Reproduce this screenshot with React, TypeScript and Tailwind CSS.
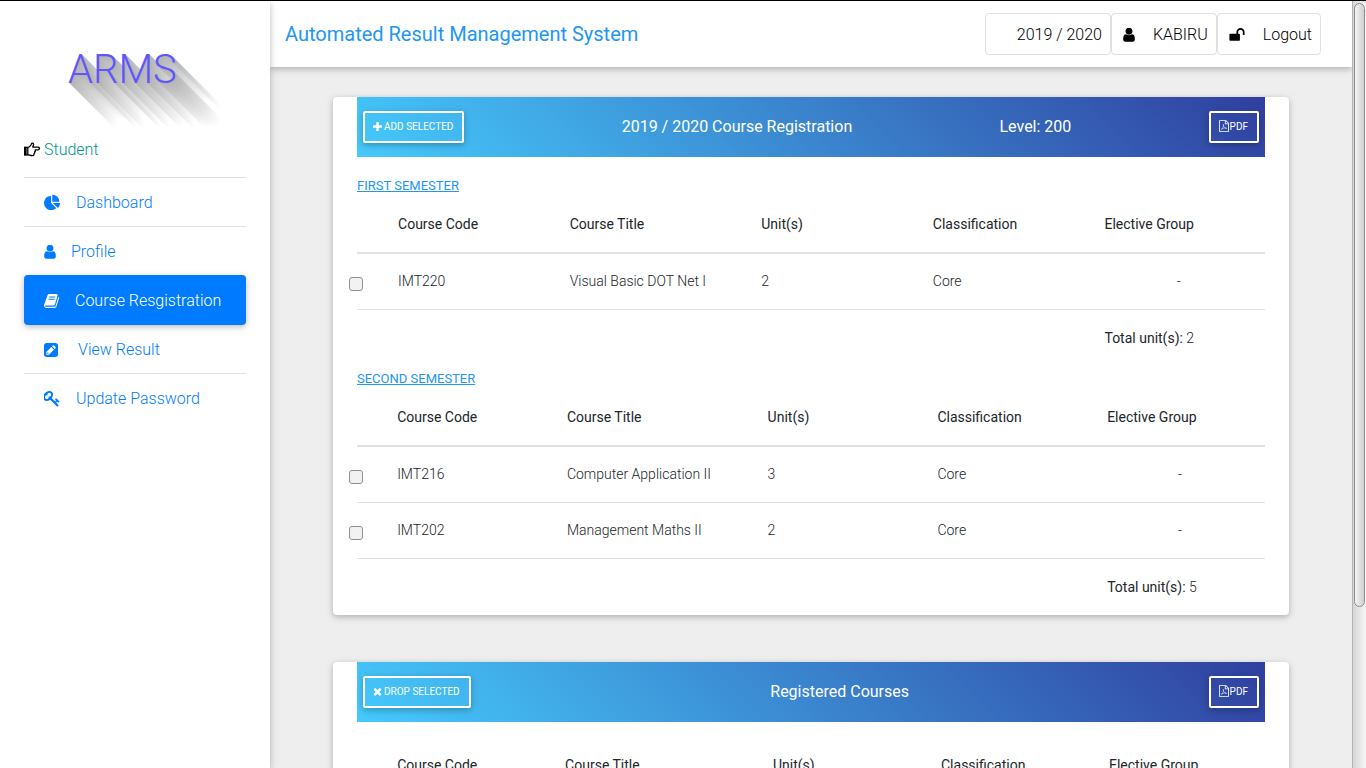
import type { CSSProperties, ReactNode } from 'react';

type IconProps = {
  className?: string;
};

type Course = {
  code: string;
  title: string;
  units: number;
  classification: string;
  group: string;
};

type CourseTableProps = {
  label: string;
  columns: string[];
  courses: Course[];
  showTotal?: boolean;
};

const headings = ['Course Code', 'Course Title', 'Unit(s)', 'Classification', 'Elective Group'];

const firstSemester: Course[] = [
  { code: 'IMT220', title: 'Visual Basic DOT Net I', units: 2, classification: 'Core', group: '-' },
];

const secondSemester: Course[] = [
  { code: 'IMT216', title: 'Computer Application II', units: 3, classification: 'Core', group: '-' },
  { code: 'IMT202', title: 'Management Maths II', units: 2, classification: 'Core', group: '-' },
];

function PieIcon({ className }: IconProps) {
  return (
    <svg viewBox="0 64 1728 1664" fill="currentColor" className={className} aria-hidden="true">
      <path d="M768 890l546 546q-106 108-247.5 168t-298.5 60q-209 0-385.5-103t-279.5-279.5-103-385.5 103-385.5 279.5-279.5 385.5-103v762zm187 6h773q0 157-60 298.5t-168 247.5zm709-128h-768v-768q209 0 385.5 103t279.5 279.5 103 385.5z" />
    </svg>
  );
}

function UserIcon({ className }: IconProps) {
  return (
    <svg viewBox="256 160 1280 1536" fill="currentColor" className={className} aria-hidden="true">
      <path d="M1536 1399q0 109-62.5 187t-150.5 78h-854q-88 0-150.5-78t-62.5-187q0-85 8.5-160.5t31.5-152 58.5-131 94-89 134.5-34.5q131 128 313 128t313-128q76 0 134.5 34.5t94 89 58.5 131 31.5 152 8.5 160.5zm-256-887q0 159-112.5 271.5t-271.5 112.5-271.5-112.5-112.5-271.5 112.5-271.5 271.5-112.5 271.5 112.5 112.5 271.5z" />
    </svg>
  );
}

function BookIcon({ className }: IconProps) {
  return (
    <svg viewBox="64 128 1664 1536" fill="currentColor" className={className} aria-hidden="true">
      <path d="M1703 478q40 57 18 129l-275 906q-19 64-76.5 107.5t-122.5 43.5h-923q-77 0-148.5-53.5t-99.5-131.5q-24-67-2-127 0-4 3-27t4-37q1-8-3-21.5t-3-19.5q2-11 8-21t16.5-23.5 16.5-23.5q23-38 45-91.5t30-91.5q3-10 .5-30t-.5-28q3-11 17-28t17-23q21-36 42-92t25-90q1-9-2.5-32t.5-28q4-13 22-30.5t22-22.5q19-26 42.5-84.5t27.5-96.5q1-8-3-25.5t-2-26.5q2-8 9-18t18-23 17-21q8-12 16.5-30.5t15-35 16-36 19.5-32 26.5-23.5 36-11.5 47.5 5.5l-1 3q38-9 51-9h761q74 0 114 56t18 130l-274 906q-36 119-71.5 153.5t-128.5 34.5h-869q-27 0-38 15-11 16-1 43 24 70 144 70h923q29 0 56-15.5t35-41.5l300-987q7-22 5-57 38 15 59 43zm-1064 2q-4 13 2 22.5t20 9.5h608q13 0 25.5-9.5t16.5-22.5l21-64q4-13-2-22.5t-20-9.5h-608q-13 0-25.5 9.5t-16.5 22.5zm-83 256q-4 13 2 22.5t20 9.5h608q13 0 25.5-9.5t16.5-22.5l21-64q4-13-2-22.5t-20-9.5h-608q-13 0-25.5 9.5t-16.5 22.5z" />
    </svg>
  );
}

function PencilSquareIcon({ className }: IconProps) {
  return (
    <svg viewBox="128 128 1536 1536" fill="currentColor" className={className} aria-hidden="true">
      <path
        fillRule="evenodd"
        d="M416 128h960q119 0 203.500 84.500t84.500 203.500v960q0 119-84.500 203.500t-203.500 84.500h-960q-119 0-203.500-84.500t-84.500-203.500v-960q0-119 84.500-203.500t203.500-84.500zM384 1120v288h288l544-544-288-288zM1008 496l288 288 92-92q28-28 28-68t-28-68l-152-152q-28-28-68-28t-68 28zM480 1168l52-52v108h96v96h-148z"
      />
    </svg>
  );
}

function KeyIcon({ className }: IconProps) {
  return (
    <svg viewBox="96 128 1640 1640" fill="currentColor" className={className} aria-hidden="true">
      <path d="M832 512q0-80-56-136t-136-56-136 56-56 136q0 42 19 83-41-19-83-19-80 0-136 56t-56 136 56 136 136 56 136-56 56-136q0-42-19-83 41 19 83 19 80 0 136-56t56-136zm851 704q0 17-49 66t-66 49q-9 0-28.5-16t-36.500-33-38.500-40-24.500-26l-96 96 220 220q28 28 28 68 0 42-39 81t-81 39q-40 0-68-28l-671-671q-176 131-365 131-163 0-265.500-102.500t-102.500-265.500q0-160 95-313t248-248 313-95q163 0 265.500 102.500t102.500 265.500q0 189-131 365l355 355 96-96q-3-3-26-24.500t-40-38.500-33-36.500-16-28.500q0-17 49-66t66-49q13 0 23 10 6 6 46 44.500t82 79.500 86.500 86 73 78 28.500 41z" />
    </svg>
  );
}

function UnlockIcon({ className }: IconProps) {
  return (
    <svg viewBox="64 128 1664 1536" fill="currentColor" className={className} aria-hidden="true">
      <path d="M1728 576v256q0 26-19 45t-45 19h-64q-26 0-45-19t-19-45v-256q0-106-75-181t-181-75-181 75-75 181v192h96q40 0 68 28t28 68v576q0 40-28 68t-68 28h-960q-40 0-68-28t-28-68v-576q0-40 28-68t68-28h672v-192q0-185 131.500-316.500t316.500-131.500 316.500 131.500 131.500 316.500z" />
    </svg>
  );
}

function HandIcon({ className }: IconProps) {
  return (
    <svg viewBox="0 0 16 16" fill="none" stroke="currentColor" strokeWidth="1.3" strokeLinejoin="round" className={className} aria-hidden="true">
      <path d="M.6 5.400h3.200v7.400H.6z" />
      <path d="M.6 5.400h1.400v7.400H.6z" fill="currentColor" />
      <path d="M3.800 5.400c1.600-.2 2.200-1.300 3-2.300.6-.8.6-2 1.400-2 1.200 0 1.500.8 1.300 1.800-.2.900-.8 1.400-.8 2.200h5.200c.8 0 1.500.6 1.500 1.300s-.6 1.400-1.400 1.400h-2.800c.4.900.2 1.600-.5 2.100.2.800-.1 1.400-.7 1.800.1 1.300-.6 2-1.900 2-2 0-2.700-.9-4.300-.9" />
    </svg>
  );
}

function PlusIcon({ className }: IconProps) {
  return (
    <svg viewBox="192 128 1408 1408" fill="currentColor" className={className} aria-hidden="true">
      <path d="M1600 736v192q0 40-28 68t-68 28h-416v416q0 40-28 68t-68 28h-192q-40 0-68-28t-28-68v-416h-416q-40 0-68-28t-28-68v-192q0-40 28-68t68-28h416v-416q0-40 28-68t68-28h192q40 0 68 28t28 68v416h416q40 0 68 28t28 68z" />
    </svg>
  );
}

function TimesIcon({ className }: IconProps) {
  return (
    <svg viewBox="192 192 1408 1408" fill="currentColor" className={className} aria-hidden="true">
      <path d="M1490 1322q0 40-28 68l-136 136q-28 28-68 28t-68-28l-294-294-294 294q-28 28-68 28t-68-28l-136-136q-28-28-28-68t28-68l294-294-294-294q-28-28-28-68t28-68l136-136q28-28 68-28t68 28l294 294 294-294q28-28 68-28t68 28l136 136q28 28 28 68t-28 68l-294 294 294 294q28 28 28 68z" />
    </svg>
  );
}

function PdfIcon({ className }: IconProps) {
  return (
    <svg viewBox="128 0 1536 1792" fill="currentColor" className={className} aria-hidden="true">
      <path d="M1596 380q28 28 48 76t20 88v1152q0 40-28 68t-68 28h-1344q-40 0-68-28t-28-68v-1600q0-40 28-68t68-28h896q40 0 88 20t76 48zm-444-244v376h376q-10-29-22-41l-313-313q-12-12-41-22zm384 1528v-1024h-416q-40 0-68-28t-28-68v-416h-768v1536h1280z" />
      <path
        d="M420 1500c180-90 440-520 420-830 0-60-70-60-70 0 20 280 200 500 440 600 120 40 170-60 40-80-260-20-520 50-720 150"
        fill="none"
        stroke="currentColor"
        strokeWidth="80"
      />
    </svg>
  );
}

function logoShadow(): CSSProperties {
  const layers: string[] = [];
  for (let i = 1; i <= 45; i++) {
    const shade = Math.round(180 + (i / 45) * 75);
    layers.push(`${i}px ${i}px 0 rgb(${shade}, ${shade}, ${shade})`);
  }
  return { textShadow: layers.join(', ') };
}

const menu = [
  { label: 'Dashboard', icon: <PieIcon className="h-4 w-4 overflow-visible" />, style: 'gap-4 border-[#dfdfdf] text-[#007bff]' },
  { label: 'Profile', icon: <UserIcon className="h-[14px] w-3" />, style: 'gap-[15px] border-[#dfdfdf] text-[#007bff]' },
  {
    label: 'Course Resgistration',
    icon: <BookIcon className="h-[14px] w-[15px]" />,
    style: 'relative z-10 gap-4 rounded border-[#007bff] bg-[#007bff] text-white shadow-[0_2px_5px_rgba(0,0,0,0.16),0_2px_10px_rgba(0,0,0,0.12)]',
  },
  { label: 'View Result', icon: <PencilSquareIcon className="h-[14px] w-[14px]" />, style: 'gap-5 border-transparent text-[#007bff]' },
  { label: 'Update Password', icon: <KeyIcon className="h-4 w-4" />, style: 'gap-4 border-[#dfdfdf] text-[#007bff]' },
];

function Sidebar() {
  return (
    <aside className="relative z-20 w-[270px] shrink-0 bg-white px-6 shadow-[0_2px_5px_rgba(0,0,0,0.16),0_2px_10px_rgba(0,0,0,0.12)]">
      <div className="pl-11 pt-[39px] text-[40px] leading-[60px] text-[#5f55ff]" style={logoShadow()}>
        ARMS
      </div>
      <p className="mt-[38px] flex items-center gap-1 leading-6 text-black">
        <HandIcon className="h-4 w-4" />
        <span className="text-[#009688]">Student</span>
      </p>
      <nav className="mt-[15px]">
        {menu.map((item) => (
          <a key={item.label} href="#" className={`-mb-px flex h-[50px] items-center border-t px-5 ${item.style}`}>
            {item.icon}
            {item.label}
          </a>
        ))}
      </nav>
    </aside>
  );
}

function Header() {
  return (
    <header className="relative z-10 flex h-[66px] shrink-0 items-center justify-between bg-white pl-[15px] pr-[31px] shadow-[0_2px_5px_rgba(0,0,0,0.16),0_2px_10px_rgba(0,0,0,0.12)]">
      <h1 className="text-xl font-normal text-[#2196f3]">Automated Result Management System</h1>
      <nav className="flex text-black">
        <a href="#" className="flex h-[42px] items-center rounded border border-[#e0e0e0] pl-[31px] pr-2 pt-[2px]">
          2019 / 2020
        </a>
        <a href="#" className="flex h-[42px] items-center gap-[18px] rounded border border-[#e0e0e0] pl-[11px] pr-2 pt-[2px]">
          <UserIcon className="h-[14px] w-3" />
          KABIRU
        </a>
        <a href="#" className="flex h-[42px] items-center gap-[18px] rounded border border-[#e0e0e0] pl-[11px] pr-2 pt-[2px]">
          <UnlockIcon className="h-[14px] w-4" />
          Logout
        </a>
      </nav>
    </header>
  );
}

function OutlineButton({ children }: { children: ReactNode }) {
  return (
    <button
      type="button"
      className="mx-[6px] flex h-8 items-center rounded-[2px] border-2 border-white pb-[2px] pl-2 pr-[9px] text-[10px] font-normal uppercase text-white shadow-[0_2px_5px_rgba(0,0,0,0.16),0_2px_10px_rgba(0,0,0,0.12)]"
    >
      {children}
    </button>
  );
}

function Card({ banner, children }: { banner: ReactNode; children: ReactNode }) {
  return (
    <section className="mb-[47px] rounded bg-white px-6 shadow-[0_2px_5px_rgba(0,0,0,0.16),0_2px_10px_rgba(0,0,0,0.12)]">
      <div className="flex h-[60px] items-center justify-between bg-linear-[45deg,#45cafc,#303f9f] font-normal text-white">
        {banner}
      </div>
      {children}
    </section>
  );
}

function CourseTable({ label, columns, courses, showTotal = true }: CourseTableProps) {
  const total = courses.reduce((sum, course) => sum + course.units, 0);

  return (
    <table aria-label={label} className="w-full table-fixed text-left text-sm text-[#212529]">
      <thead>
        <tr className="h-[57px] border-b-2 border-[#dee2e6]">
          <td className={columns[0]} />
          {headings.map((heading, index) => (
            <th key={heading} scope="col" className={`px-3 font-normal ${columns[index + 1]}`}>
              {heading}
            </th>
          ))}
        </tr>
      </thead>
      <tbody>
        {courses.map((course) => (
          <tr key={course.code} className="h-14 border-b border-[#dee2e6]">
            <td className="pl-3">
              <input
                type="checkbox"
                aria-label={course.code}
                className="-ml-5 mt-[6px] block h-[14px] w-[14px] appearance-none rounded-[3px] border border-[#8f8f8f] bg-[#f2f2f2] checked:bg-[#007bff]"
              />
            </td>
            <td className="px-3">{course.code}</td>
            <td className="px-3">{course.title}</td>
            <td className="px-3">{course.units}</td>
            <td className="px-3">{course.classification}</td>
            <td className="px-3 text-center">{course.group}</td>
          </tr>
        ))}
        {showTotal && (
          <tr className="h-[57px]">
            <td colSpan={5} />
            <td className="px-3">
              <span className="font-normal">Total unit(s):</span> {total}
            </td>
          </tr>
        )}
      </tbody>
    </table>
  );
}

function SemesterHeading({ children }: { children: ReactNode }) {
  return (
    <h2 className="pt-[3px] text-[13px] font-normal uppercase leading-5 text-[#2196f3] underline">{children}</h2>
  );
}

export default function App() {
  return (
    <div className="flex h-screen overflow-hidden border-t border-black bg-[#eee] font-['Roboto',sans-serif] text-base font-light">
      <Sidebar />
      <div className="flex min-w-0 flex-1 flex-col overflow-hidden">
        <Header />
        <main className="min-h-0 flex-1 overflow-hidden px-[63px] pt-[30px]">
          <Card
            banner={
              <>
                <OutlineButton>
                  <PlusIcon className="mr-[2px] h-[9px] w-[9px]" />
                  Add Selected
                </OutlineButton>
                <span className="pl-5">2019 / 2020 Course Registration</span>
                <span className="pl-4">Level: 200</span>
                <OutlineButton>
                  <PdfIcon className="mr-px h-3 w-[10px]" />
                  PDF
                </OutlineButton>
              </>
            }
          >
            <div className="pt-4">
              <SemesterHeading>First Semester</SemesterHeading>
              <CourseTable
                label="First semester courses"
                columns={['w-[3.2%]', 'w-[18.9%]', 'w-[21.1%]', 'w-[18.9%]', 'w-[18.9%]', 'w-[19%]']}
                courses={firstSemester}
              />
              <SemesterHeading>Second Semester</SemesterHeading>
              <CourseTable
                label="Second semester courses"
                columns={['w-[3.1%]', 'w-[18.7%]', 'w-[22.1%]', 'w-[18.7%]', 'w-[18.7%]', 'w-[18.7%]']}
                courses={secondSemester}
              />
            </div>
          </Card>
          <Card
            banner={
              <>
                <OutlineButton>
                  <TimesIcon className="mr-[2px] h-[9px] w-[9px]" />
                  Drop Selected
                </OutlineButton>
                <span>Registered Courses</span>
                <OutlineButton>
                  <PdfIcon className="mr-px h-3 w-[10px]" />
                  PDF
                </OutlineButton>
              </>
            }
          >
            <div className="pt-[15px]">
              <CourseTable
                label="Registered courses"
                columns={['w-[3.1%]', 'w-[18.5%]', 'w-[22.9%]', 'w-[18.5%]', 'w-[18.5%]', 'w-[18.5%]']}
                courses={[]}
                showTotal={false}
              />
            </div>
          </Card>
        </main>
      </div>
      <div className="w-[14px] shrink-0 border-l border-[#b4b4b4] bg-linear-to-r from-[#d6d6d6] to-[#f6f6f6] px-px pt-[2px]">
        <div className="h-[79%] rounded-full border border-[#8c8c8c] bg-linear-to-r from-[#f4f4f4] to-[#cfcfcf]" />
      </div>
    </div>
  );
}
